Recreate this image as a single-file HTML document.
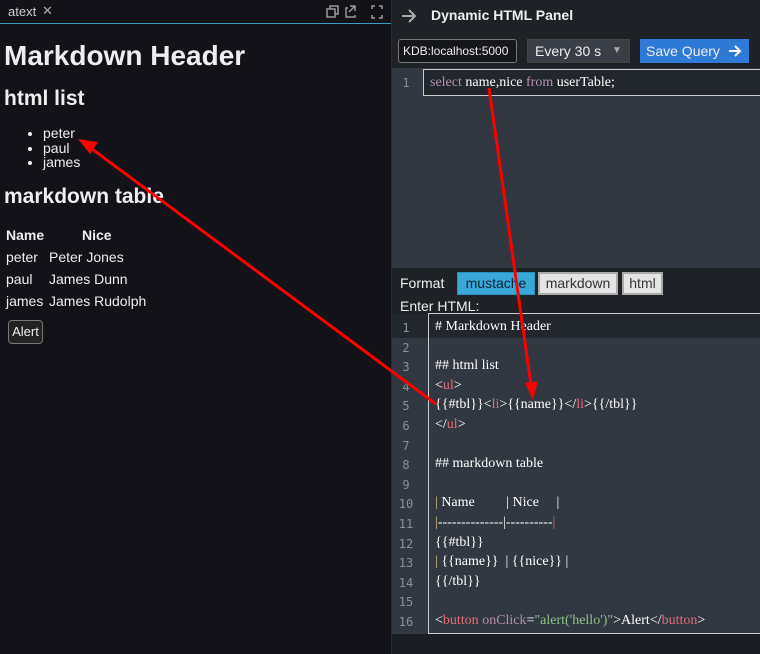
<!DOCTYPE html>
<html><head><style>
*{box-sizing:border-box;margin:0;padding:0}
body{width:760px;height:654px;overflow:hidden;background:#121218;font-family:"Liberation Sans",sans-serif;position:relative;color:#eee}
.abs{position:absolute}
.left{left:0;top:0;width:391px;height:654px;background:#121218}
.tab{left:0;top:0;width:391px;height:24px;border-bottom:1px solid #3aa0c0}
.right{left:391px;top:0;width:369px;height:654px;background:#1e2126;border-left:1px solid #2a2d33}
.code{font-family:"Liberation Serif",serif;font-size:14px;color:#fff;white-space:pre}
.ln{font-family:"DejaVu Sans Mono",monospace;font-size:12px;color:#8a9099;width:28px;text-align:center}
.r{color:#e06c75}.p{color:#b48ead}.g{color:#8fc08a}.y{color:#d8c07a}
</style></head><body>
<div class="abs left">
 <div class="abs tab"><span class="abs" style="left:8px;top:4px;font-size:13px;color:#ccc">atext</span><span class="abs" style="left:42px;top:3px;font-size:13px;color:#aaa">✕</span>
 <svg class="abs" style="left:326px;top:5px" width="60" height="14" fill="none" stroke="#999" stroke-width="1.5"><rect x="1" y="4" width="8" height="8"/><path d="M4 4V1h8v8h-3"/><path d="M22 3h-2v9h9v-2M24 1h5v5M29 1l-6 6"/><path d="M46 4V1h3M53 1h3v3M56 10v3h-3M49 13h-3v-3"/></svg>
 </div>
 <div class="abs" style="left:4px;top:40px;font-size:28px;font-weight:bold">Markdown Header</div>
 <div class="abs" style="left:4px;top:87px;font-size:21px;font-weight:bold">html list</div>
 <ul class="abs" style="left:43px;top:126px;font-size:14px;line-height:14.5px;list-style:disc;padding-left:0">
  <li>peter</li><li>paul</li><li>james</li></ul>
 <div class="abs" style="left:4px;top:185px;font-size:21px;font-weight:bold">markdown table</div>
 <div class="abs" style="left:6px;top:227px;font-size:14px;font-weight:bold">Name</div>
 <div class="abs" style="left:82px;top:227px;font-size:14px;font-weight:bold">Nice</div>
 <div class="abs" style="left:6px;top:246px;font-size:14px;line-height:22px">peter<br>paul<br>james</div>
 <div class="abs" style="left:49px;top:246px;font-size:14px;line-height:22px">Peter Jones<br>James Dunn<br>James Rudolph</div>
 <div class="abs" style="left:8px;top:320px;width:35px;height:24px;border:1px solid #777;border-radius:4px;background:#222;font-size:13px;text-align:center;line-height:22px">Alert</div>
</div>
<div class="abs right">
 <svg class="abs" style="left:9px;top:8px" width="16" height="16" fill="none" stroke="#aaa" stroke-width="2"><path d="M1 8h13M8 2l6 6-6 6"/></svg>
 <div class="abs" style="left:39px;top:7px;font-size:14px;font-weight:bold;color:#eee">Dynamic HTML Panel</div>
 <div class="abs" style="left:6px;top:39px;width:119px;height:24px;border:1px solid #777;border-radius:3px;background:#15171b;font-size:12px;line-height:22px;padding-left:4px;color:#eee">KDB:localhost:5000 <span style="font-size:11px">⌄</span></div>
 <div class="abs" style="left:135px;top:39px;width:103px;height:24px;background:#3a3f47;border:1px solid #444;font-size:14px;line-height:22px;padding-left:7px">Every 30 s<span class="abs" style="color:#aaa;font-size:10px;left:84px;top:0">▼</span></div>
 <div class="abs" style="left:248px;top:39px;width:109px;height:24px;background:#2f7ad6;font-size:14px;line-height:24px;padding-left:6px">Save Query<svg class="abs" style="left:88px;top:5px" width="14" height="14" fill="none" stroke="#fff" stroke-width="2"><path d="M1 7h11M7 2l5 5-5 5"/></svg></div>
 <div class="abs" style="left:0;top:68px;width:369px;height:200px;background:#323841"></div>
 <div class="abs" style="left:31px;top:69px;width:338px;height:27px;border:1px solid #ccc;border-right:none;background:#22272e"></div>
 <div class="abs ln" style="left:0;top:76px">1</div>
 <div class="abs code" style="left:38px;top:75px"><span class="p">select</span> name,nice <span class="p">from</span> userTable;</div>
 <div class="abs" style="left:8px;top:275px;font-size:14px">Format</div>
 <div class="abs" style="left:65px;top:272px;width:78px;height:23px;background:#38a8d8;border:1px solid #2a90c0;color:#123;font-size:14px;text-align:center;line-height:21px">mustache</div>
 <div class="abs" style="left:146px;top:272px;width:80px;height:23px;background:#e4e4e4;border:2px solid #aaa;color:#333;font-size:14px;text-align:center;line-height:19px">markdown</div>
 <div class="abs" style="left:230px;top:272px;width:41px;height:23px;background:#e4e4e4;border:2px solid #aaa;color:#333;font-size:14px;text-align:center;line-height:19px">html</div>
 <div class="abs" style="left:8px;top:298px;font-size:14px">Enter HTML:</div>
 <div class="abs" style="left:0;top:314px;width:369px;height:320px;background:#323841"></div>
 <div class="abs" style="left:0;top:314px;width:369px;height:24px;background:#22272e"></div>
 <div class="abs" style="left:36px;top:313px;width:333px;height:321px;border:1px solid #ccc;border-right:none"></div>
 <div class="abs ln" style="left:0;top:319px;line-height:19.6px">1<br>2<br>3<br>4<br>5<br>6<br>7<br>8<br>9<br>10<br>11<br>12<br>13<br>14<br>15<br>16</div>
 <div class="abs code" style="left:43px;top:317px;line-height:19.6px"># Markdown Header

## html list
&lt;<span class="r">ul</span>&gt;
{{#tbl}}&lt;<span class="r">li</span>&gt;{{name}}&lt;/<span class="r">li</span>&gt;{{/tbl}}
&lt;/<span class="r">ul</span>&gt;

## markdown table

<span class="y">|</span> Name         | Nice     |
<span class="y">|</span>--------------|----------<span class="r">|</span>
{{#tbl}}
<span class="y">|</span> {{name}}  | {{nice}} |
{{/tbl}}

&lt;<span class="r">button</span> <span class="p">onClick</span>=<span class="g">"alert('hello')"</span>&gt;Alert&lt;/<span class="r">button</span>&gt;</div>
 <div class="abs" style="left:0;top:634px;width:369px;height:20px;background:#1a1d22"></div>
</div>
<svg class="abs" style="left:0;top:0" width="760" height="654">
 <g stroke="#f00" stroke-width="3" fill="#f00">
  <line x1="489" y1="88" x2="531" y2="385"/>
  <polygon points="533,400 525,383 538,381" stroke="none"/>
  <line x1="436" y1="404" x2="92" y2="149"/>
  <polygon points="78,139 98,142 90,154" stroke="none"/>
 </g>
</svg>
</body></html>
